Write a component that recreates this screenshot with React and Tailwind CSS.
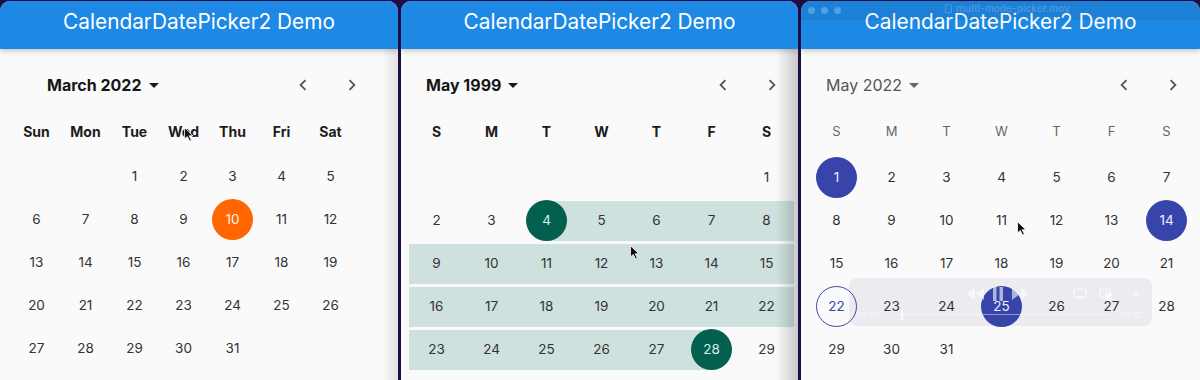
import React from 'react';

const ChevronLeft = () => (
  <svg width="22" height="22" viewBox="0 0 24 24">
    <path d="M15.41 7.41L14 6l-6 6 6 6 1.41-1.41L10.83 12z" fill="currentColor" />
  </svg>
);

const ChevronRight = () => (
  <svg width="22" height="22" viewBox="0 0 24 24">
    <path d="M10 6L8.59 7.41 13.17 12l-4.58 4.59L10 18l6-6z" fill="currentColor" />
  </svg>
);

const DropDown = ({ color }) => (
  <svg width="24" height="24" viewBox="0 0 24 24" className={color}>
    <path d="M7 10l5 5 5-5z" fill="currentColor" />
  </svg>
);

const Cursor = ({ className }) => (
  <svg width="10" height="15" viewBox="0 0 11 16" className={className}>
    <path d="M0.5 0.5 L0.5 13 L3.6 10.2 L6.2 15.2 L8.2 14.3 L5.7 9.4 L9.8 9.4 Z" fill="#111" stroke="#fff" strokeWidth="0.9" />
  </svg>
);

// only the first five weeks fit in the shot
function buildCells(offset, count) {
  const cells = [];
  for (let i = 0; i < offset; i++) cells.push(null);
  for (let d = 1; d <= count; d++) cells.push(d);
  return cells.slice(0, 35);
}

const AppBar = () => (
  <div className="relative z-10 flex h-[48px] shrink-0 justify-center bg-[#1e88e5] pt-[11px] shadow-[0_2px_5px_rgba(0,0,0,0.22)]">
    <span className="text-[20.8px] leading-[20px] text-white">CalendarDatePicker2 Demo</span>
  </div>
);

const Header = ({ label, labelCls, arrowCls, padCls }) => (
  <div className={`mt-[11px] flex h-[50px] items-center justify-between ${padCls}`}>
    <div className="flex items-center">
      <span className={`text-[16px] ${labelCls}`}>{label}</span>
      <DropDown color={arrowCls} />
    </div>
    <div className="flex items-center gap-[1px] text-[#555]">
      <div className="flex h-[48px] w-[48px] items-center justify-center">
        <ChevronLeft />
      </div>
      <div className="flex h-[48px] w-[48px] items-center justify-center">
        <ChevronRight />
      </div>
    </div>
  </div>
);

const DayCell = ({ d, kind, circleCls, circleText }) => {
  if (d === null) return <div className="h-[43px]" />;
  const filled = kind === 'circle' || kind === 'start' || kind === 'end';
  return (
    <div className="relative flex h-[43px] items-center justify-center">
      {kind === 'range' && <div className="absolute inset-x-0 h-[40px] bg-[#cfe1de]" />}
      {kind === 'start' && <div className="absolute left-1/2 right-0 h-[40px] bg-[#cfe1de]" />}
      {kind === 'end' && <div className="absolute left-0 right-1/2 h-[40px] bg-[#cfe1de]" />}
      {filled && <div className={`absolute h-[41px] w-[41px] rounded-full ${circleCls}`} />}
      {kind === 'outline' && (
        <div className="absolute h-[41px] w-[41px] rounded-full border border-[#3949ab]" />
      )}
      <span
        className={`relative text-[13.5px] ${
          filled ? circleText : kind === 'outline' ? 'text-[#3949ab]' : 'text-[#333]'
        }`}
      >
        {d}
      </span>
    </div>
  );
};

const PanelOne = () => {
  const cells = buildCells(2, 31);
  return (
    <div className="relative flex h-[388px] w-[398px] shrink-0 flex-col overflow-hidden rounded-[10px] bg-[#fafafa]">
      <AppBar />
      <Header label="March 2022" labelCls="font-bold text-[#161616]" arrowCls="text-[#1a1a1a]" padCls="pl-[47px] pr-[22px]" />
      <div className="ml-[12px] w-[343px]">
        <div className="grid h-[43px] grid-cols-7 items-center text-center text-[14px] font-bold text-[#1c1c1c]">
          {['Sun', 'Mon', 'Tue', 'Wed', 'Thu', 'Fri', 'Sat'].map((w) => (
            <span key={w}>{w}</span>
          ))}
        </div>
        <div className="mt-[2px] grid grid-cols-7">
          {cells.map((d, i) => (
            <DayCell key={i} d={d} kind={d === 10 ? 'circle' : null} circleCls="bg-[#ff6600]" circleText="text-[#fff1e6]" />
          ))}
        </div>
      </div>
      <Cursor className="absolute left-[184px] top-[126px]" />
      <div className="absolute inset-y-0 right-0 w-[16px] bg-gradient-to-l from-black/10 to-transparent" />
    </div>
  );
};

const PanelTwo = () => {
  const cells = buildCells(6, 31);
  const kindOf = (d) => {
    if (d === 4) return 'start';
    if (d === 28) return 'end';
    if (d > 4 && d < 28) return 'range';
    return null;
  };
  return (
    <div className="relative flex h-[388px] w-[397px] shrink-0 flex-col overflow-hidden rounded-[10px] bg-[#fafafa]">
      <AppBar />
      <Header label="May 1999" labelCls="font-bold text-[#161616]" arrowCls="text-[#1a1a1a]" padCls="pl-[25px] pr-[2px]" />
      <div className="ml-[8px] w-[385px]">
        <div className="grid h-[43px] grid-cols-7 items-center text-center text-[14px] font-bold text-[#1c1c1c]">
          {['S', 'M', 'T', 'W', 'T', 'F', 'S'].map((w, i) => (
            <span key={i}>{w}</span>
          ))}
        </div>
        <div className="mt-[3px] grid grid-cols-7">
          {cells.map((d, i) => (
            <DayCell key={i} d={d} kind={kindOf(d)} circleCls="bg-[#03604f]" circleText="text-[#d6efe9]" />
          ))}
        </div>
      </div>
      <Cursor className="absolute left-[229px] top-[244px]" />
      <div className="absolute inset-y-0 right-0 w-[22px] bg-gradient-to-l from-black/20 to-transparent" />
    </div>
  );
};

// translucent player controls of the screen recording, drawn over the calendar
const VideoBarBack = () => (
  <div className="absolute left-[48px] top-[277px] h-[48px] w-[303px] rounded-[8px] bg-[#dcdce4]/45" />
);

const VideoBarControls = () => (
  <div className="absolute left-[48px] top-[277px] z-20 h-[48px] w-[303px]">
    <div className="absolute left-[116px] top-[8px] flex items-center gap-[6px] text-white/60">
      <svg width="20" height="14" viewBox="0 0 20 14">
        <path d="M10 1 L2 7 L10 13 Z M19 1 L11 7 L19 13 Z" fill="currentColor" />
      </svg>
      <svg width="14" height="16" viewBox="0 0 14 16">
        <rect x="2" y="1" width="3.5" height="14" fill="currentColor" />
        <rect x="8.5" y="1" width="3.5" height="14" fill="currentColor" />
      </svg>
      <svg width="20" height="14" viewBox="0 0 20 14">
        <path d="M1 1 L9 7 L1 13 Z M10 1 L18 7 L10 13 Z" fill="currentColor" />
      </svg>
    </div>
    <svg width="14" height="12" viewBox="0 0 14 12" className="absolute left-[224px] top-[10px] text-white/70">
      <rect x="1" y="1" width="12" height="8" rx="1" fill="none" stroke="currentColor" strokeWidth="1.2" />
      <path d="M4 11.5 L7 7.5 L10 11.5 Z" fill="currentColor" />
    </svg>
    <svg width="14" height="12" viewBox="0 0 14 12" className="absolute left-[250px] top-[10px] text-white/70">
      <rect x="1" y="1" width="10" height="8" rx="1" fill="none" stroke="currentColor" strokeWidth="1.2" />
      <rect x="6" y="5.5" width="7" height="6" rx="1" fill="currentColor" />
    </svg>
    <span className="absolute left-[283px] top-[6px] text-[13px] text-white/70">»</span>
    <span className="absolute left-[8px] top-[31px] text-[8px] text-white/60">00:00</span>
    <div className="absolute left-[42px] top-[36px] h-[1px] w-[219px] bg-white/45" />
    <div className="absolute left-[52px] top-[32px] h-[10px] w-[2px] bg-white/80" />
    <span className="absolute left-[272px] top-[31px] text-[8px] text-white/60">00:07</span>
  </div>
);

const PanelThree = () => {
  const cells = buildCells(0, 31);
  const kindOf = (d) => {
    if (d === 1 || d === 14 || d === 25) return 'circle';
    if (d === 22) return 'outline';
    return null;
  };
  return (
    <div className="relative flex h-[388px] w-[399px] shrink-0 flex-col overflow-hidden rounded-[10px] bg-[#fafafa]">
      <AppBar />
      {/* window title strip of the screen recording */}
      <div className="absolute inset-x-0 top-0 z-20 flex h-[19px] items-start bg-black/[0.06] pt-[2px]">
        <div className="ml-[7px] mt-[4px] flex gap-[6px]">
          <span className="h-[7px] w-[7px] rounded-full bg-white/25" />
          <span className="h-[7px] w-[7px] rounded-full bg-white/25" />
          <span className="h-[7px] w-[7px] rounded-full bg-white/25" />
        </div>
        <div className="ml-[104px] flex items-center gap-[4px] text-[10px] font-semibold leading-[10px] text-white/20">
          <svg width="7" height="9" viewBox="0 0 7 9">
            <path d="M0.5 0.5 H4.5 L6.5 2.5 V8.5 H0.5 Z" fill="none" stroke="currentColor" />
          </svg>
          <span>multi-mode-picker.mov</span>
        </div>
      </div>
      <Header label="May 2022" labelCls="text-[#555]" arrowCls="text-[#666]" padCls="pl-[25px] pr-[3px]" />
      <VideoBarBack />
      <div className="ml-[8px] w-[385px]">
        <div className="grid h-[43px] grid-cols-7 items-center text-center text-[13px] text-[#666]">
          {['S', 'M', 'T', 'W', 'T', 'F', 'S'].map((w, i) => (
            <span key={i}>{w}</span>
          ))}
        </div>
        <div className="mt-[3px] grid grid-cols-7">
          {cells.map((d, i) => (
            <DayCell key={i} d={d} kind={kindOf(d)} circleCls="bg-[#3745aa]" circleText="text-[#eef0ff]" />
          ))}
        </div>
      </div>
      <VideoBarControls />
      <Cursor className="absolute left-[216px] top-[220px] z-30" />
    </div>
  );
};

export default function App() {
  return (
    <div className="flex h-[380px] w-[1200px] gap-[3px] overflow-hidden bg-[#1c0e42] pt-[1px] font-['Inter','Noto_Sans',sans-serif]">
      <PanelOne />
      <PanelTwo />
      <PanelThree />
    </div>
  );
}
